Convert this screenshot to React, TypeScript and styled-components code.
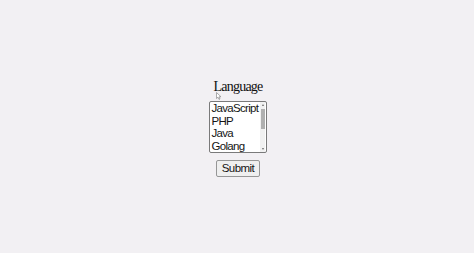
import React from "react";
import styled, {createGlobalStyle} from "styled-components";

const GlobalStyle = createGlobalStyle`
  html, body {
    margin: 0;
    padding: 0;
    background-color: #f2f0f3;
  }
  body {
    height: 253px;
    overflow: hidden;
  }
`

const Page = styled.main`
  display: flex;
  justify-content: center;
  padding-top: 79px;
  box-sizing: border-box;
  height: 253px;
`

const Form = styled.form`
  position: relative;
  display: flex;
  flex-direction: column;
  align-items: center;
`

const Label = styled.label`
  font-family: "Liberation Serif", "Times New Roman", serif;
  font-size: 14px;
  line-height: 16px;
  letter-spacing: -0.75px;
  color: #0f0f0f;
  margin-left: 2px;
`

const ListFrame = styled.div`
  display: flex;
  margin: 6px 0 0 1px;
  width: 58px;
  height: 52px;
  box-sizing: border-box;
  border: 1px solid #7a7a7a;
  border-radius: 2px;
  background: #ffffff;
  overflow: hidden;
`

const LanguageList = styled.select`
  flex: 1;
  min-width: 0;
  height: 50px;
  border: none;
  background: transparent;
  padding: 0 0 0 1px;
  margin: 0;
  outline: none;
  overflow: hidden;
  scrollbar-width: none;
  font-family: "Liberation Sans", Arial, sans-serif;
  font-size: 11.5px;
  color: #141414;

  &::-webkit-scrollbar {
    display: none;
  }
`

const Option = styled.option`
  font-size: 11.5px;
  line-height: 12.5px;
  min-height: 12.5px;
  padding: 0 0 0 1px;
  letter-spacing: -0.7px;
`

const ScrollRail = styled.div`
  display: flex;
  flex-direction: column;
  align-items: center;
  width: 5px;
  margin-right: 0.5px;
  background: #f1f1f1;
`

const Arrow = styled.div<{ $down?: boolean }>`
  width: 0;
  height: 0;
  margin: ${p => p.$down ? "auto 0 2px" : "2px 0 0"};
  border-left: 1.5px solid transparent;
  border-right: 1.5px solid transparent;
  ${p => p.$down ? "border-top: 2px solid #6a6a6a;" : "border-bottom: 2px solid #6a6a6a;"}
`

const Thumb = styled.div`
  margin-top: 3px;
  width: 4px;
  height: 20px;
  background: #b0b0b0;
`

const SubmitButton = styled.button`
  margin-top: 7px;
  margin-left: 2px;
  height: 17px;
  box-sizing: border-box;
  padding: 0 5px;
  border: 1px solid #969696;
  border-radius: 2px;
  background: #efefef;
  font-family: "Liberation Sans", Arial, sans-serif;
  font-size: 11.5px;
  line-height: 13px;
  letter-spacing: -0.55px;
  color: #141414;
`

const Pointer = styled.svg`
  position: absolute;
  left: 8px;
  top: 13px;
  width: 6px;
  height: 8px;
  pointer-events: none;
`

const languages = ["JavaScript", "PHP", "Java", "Golang", "Python", "C#", "Ruby", "Swift"];

const App: React.FunctionComponent = () => {
    return (
        <>
            <GlobalStyle/>
            <Page>
                <Form onSubmit={(e) => e.preventDefault()}>
                    <Label htmlFor="language">Language</Label>
                    <Pointer viewBox="0 0 6 8">
                        <path d="M0.5 0.5 L0.5 6.5 L2 5.2 L3 7.4 L4 7 L3 4.8 L5 4.8 Z" fill="#ffffff" stroke="#8a8a8a" strokeWidth="0.7"/>
                    </Pointer>
                    <ListFrame>
                        <LanguageList id="language" name="language" size={4}>
                            {languages.map((l) => <Option key={l} value={l}>{l}</Option>)}
                        </LanguageList>
                        <ScrollRail>
                            <Arrow/>
                            <Thumb/>
                            <Arrow $down/>
                        </ScrollRail>
                    </ListFrame>
                    <SubmitButton type="submit">Submit</SubmitButton>
                </Form>
            </Page>
        </>
    )
}

export default App
